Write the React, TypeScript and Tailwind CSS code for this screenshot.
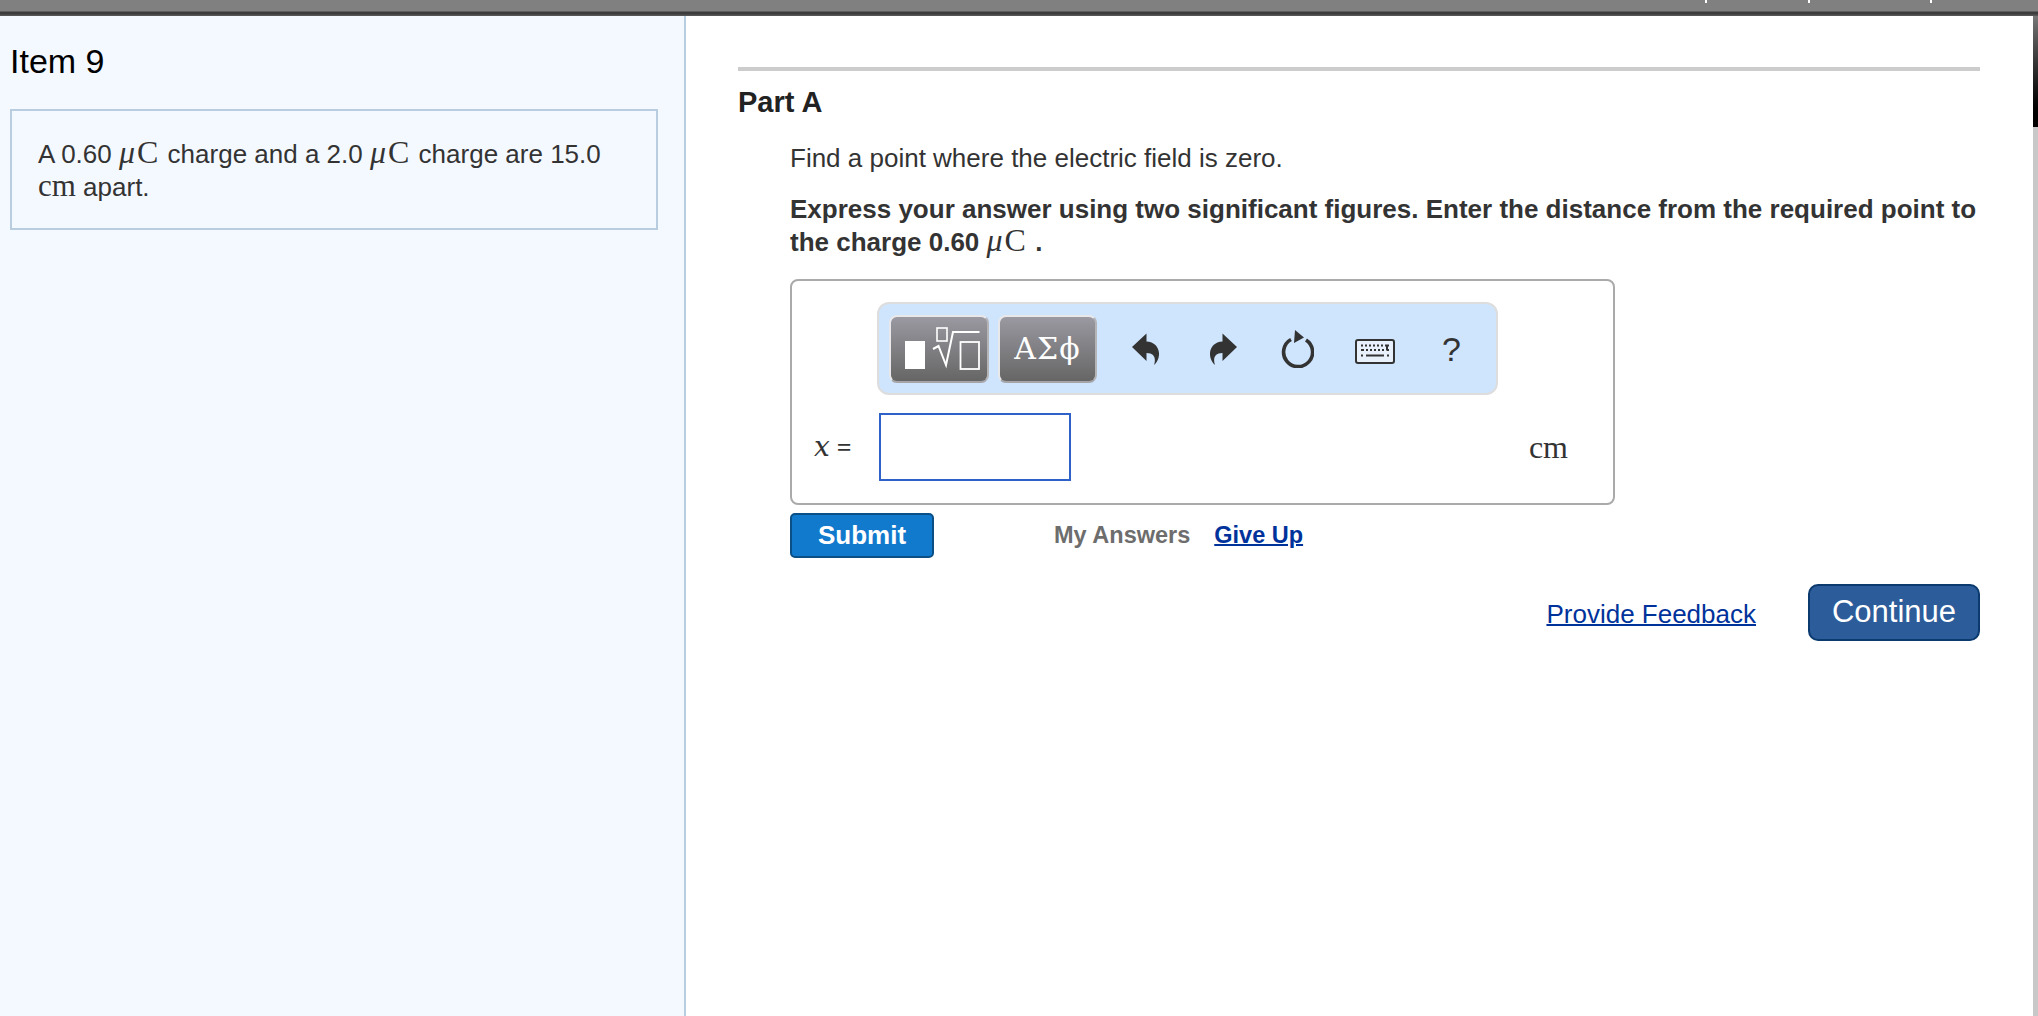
import React from 'react';

const serif = "font-['Liberation_Serif',serif]";

const MicroCoulomb = () => (
  <span className={`${serif} font-normal text-[32px] leading-[0] tracking-[2px]`}>
    <i>μ</i>C
  </span>
);

const UndoIcon = ({ flip }: { flip?: boolean }) => (
  <svg width="27" height="32" viewBox="0 0 27 32" className={flip ? '-scale-x-100' : ''}>
    <path
      d="M0 14 L14.5 0.5 V8.5 C23 9 27.5 15 27 22 C26.8 26 24.5 30 22 32 C24 26 23 20 14.5 20 V28 Z"
      fill="#333"
    />
  </svg>
);

const ResetIcon = () => (
  <svg width="34" height="38" viewBox="0 0 34 38">
    <path d="M11 9.5 A14.5 14.5 0 1 0 26 10" fill="none" stroke="#333" strokeWidth="3.6" />
    <path d="M15 0 L24 7.5 L14 13 Z" fill="#333" />
  </svg>
);

const KeyboardIcon = () => (
  <svg width="40" height="25" viewBox="0 0 40 25">
    <rect x="1" y="1" width="38" height="23" rx="2" fill="#e8f1fb" stroke="#333" strokeWidth="2" />
    <path
      d="M6 6.5h2M10 6.5h2M14 6.5h2M18 6.5h2M22 6.5h2M26 6.5h2M30 6.5h4M6 11h3M11 11h2M15 11h2M19 11h2M23 11h2M27 11h2M32 11h2M32 6.5v5M6 16.5h2M11 16.5h18M32 16.5h2"
      fill="none"
      stroke="#333"
      strokeWidth="2"
    />
  </svg>
);

const TemplateIcon = () => (
  <svg width="75" height="44" viewBox="0 0 75 44">
    <rect x="0" y="14" width="20" height="28" fill="#fff" />
    <rect x="32" y="1" width="10" height="13" fill="none" stroke="#fff" strokeWidth="1.6" />
    <path d="M28 22 L33.5 19 L41 38 L48 5 H74.5" fill="none" stroke="#fff" strokeWidth="2" />
    <rect x="55.5" y="15" width="18.5" height="27" fill="none" stroke="#fff" strokeWidth="1.8" />
  </svg>
);

const toolButton =
  'flex h-[68px] items-center justify-center rounded-[8px] border-2 border-t-[#e8e8ea] border-l-[#e8e8ea] border-r-[#b5b5b8] border-b-[#a5a5a8] bg-gradient-to-b from-[#9b99a1] to-[#666666]';

const App = () => {
  return (
    <div className="flex h-screen w-full flex-col overflow-hidden bg-white font-['Liberation_Sans',sans-serif] text-[#333]">
      <div className="relative h-[16px] shrink-0 bg-[linear-gradient(#808080_0,#808080_11px,#3c3c3c_12px,#3c3c3c_14px,#555_15px)]">
        <span className="absolute left-[1705px] top-0 h-[3px] w-[2px] bg-white" />
        <span className="absolute left-[1808px] top-0 h-[3px] w-[2px] bg-white" />
        <span className="absolute left-[1930px] top-0 h-[3px] w-[2px] bg-white" />
      </div>

      <div className="flex min-h-0 flex-1">
        <aside className="w-[686px] shrink-0 border-r-2 border-[#b8cde0] bg-[#f4f9ff] pl-[10px] pr-[26px]">
          <h1 className="mt-[26px] text-[34px] leading-[38px] text-black">Item 9</h1>
          <div className="mt-[29px] h-[121px] border-2 border-[#b8cde0] pl-[26px] pr-[40px] pt-[27px] text-[26px] leading-[33px]">
            A 0.60 <MicroCoulomb /> charge and a 2.0 <MicroCoulomb /> charge are 15.0{' '}
            <span className={`${serif} text-[31px] leading-[0]`}>cm</span> apart.
          </div>
        </aside>

        <main className="min-w-0 flex-1 pl-[52px] pr-[53px] pt-[51px]">
          <div className="h-[4px] bg-[#cccccc]" />
          <h2 className="mt-[15px] text-[29px] font-bold leading-[32px] text-[#222]">Part A</h2>
          <div className="pl-[52px]">
            <p className="mt-[24px] text-[26px] leading-[33px]">Find a point where the electric field is zero.</p>
            <p className="mt-[18px] text-[26px] font-bold leading-[33px]">
              Express your answer using two significant figures. Enter the distance from the required point to the
              charge 0.60 <MicroCoulomb /> .
            </p>

            <div className="mt-[20px] h-[226px] w-[825px] rounded-[8px] border-2 border-[#aaaaaa] pt-[21px]">
              <div className="ml-[85px] flex h-[93px] w-[621px] items-center rounded-[12px] border-2 border-[#dddddd] bg-[#cfe5fe] pl-[10px]">
                <div className={`${toolButton} w-[100px] pl-[7px]`}>
                  <TemplateIcon />
                </div>
                <div
                  className={`${toolButton} ml-[9px] w-[99px] font-['DejaVu_Serif',serif] text-[30px] tracking-[1px] text-white`}
                >
                  ΑΣϕ
                </div>
                <div className="ml-[35px] flex items-center">
                  <UndoIcon />
                </div>
                <div className="ml-[51px] flex items-center">
                  <UndoIcon flip />
                </div>
                <div className="ml-[43px] flex items-center">
                  <ResetIcon />
                </div>
                <div className="ml-[41px] flex items-center pt-[6px]">
                  <KeyboardIcon />
                </div>
                <div className="ml-[47px] text-[34px] leading-[40px] text-[#333]">?</div>
              </div>

              <div className="mt-[18px] flex items-center pl-[22px] pr-[45px]">
                <span className="flex w-[65px] items-center">
                  <i className="font-['DejaVu_Serif',serif] text-[28px] leading-[0]">x</i>
                  <span className={`${serif} ml-[7px] text-[26px] font-bold`}>=</span>
                </span>
                <div className="h-[68px] w-[192px] border-2 border-[#2e62c8] bg-white" />
                <span className={`${serif} ml-auto text-[32px] leading-none`}>cm</span>
              </div>
            </div>

            <div className="mt-[8px] flex items-center">
              <button className="h-[45px] w-[144px] rounded-[5px] border-2 border-[#0a4f86] bg-[#117acd] text-[26px] font-bold text-white">
                Submit
              </button>
              <span className="ml-[120px] text-[23.5px] font-bold text-[#6d6d6d]">My Answers</span>
              <a className="ml-[24px] text-[23.5px] font-bold text-[#00329b] underline decoration-2">Give Up</a>
            </div>
          </div>

          <div className="mt-[26px] flex items-center justify-end">
            <a className="mt-[4px] text-[26px] text-[#00329b] underline decoration-2">Provide Feedback</a>
            <button className="ml-[52px] h-[57px] w-[172px] rounded-[10px] border-2 border-[#0a3a6e] bg-[#2c5c9a] text-[31px] text-white">
              Continue
            </button>
          </div>
        </main>

        <div className="w-[5px] shrink-0 bg-[#c8c8c8]">
          <div className="h-[111px] bg-gradient-to-b from-[#777] to-black" />
        </div>
      </div>
    </div>
  );
};

export default App;
